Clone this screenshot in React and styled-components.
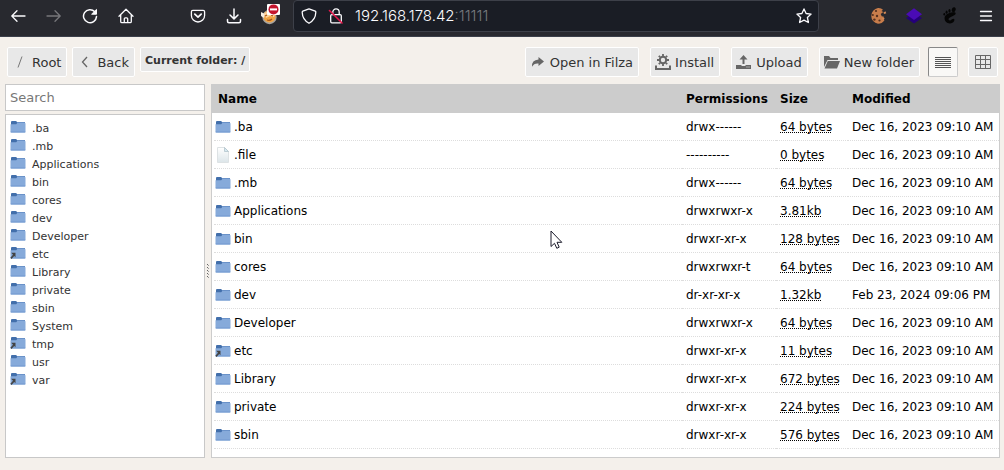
import React from 'react';
import styled, { createGlobalStyle } from 'styled-components';

const GlobalStyle = createGlobalStyle`
  * {
    box-sizing: border-box;
  }
  body {
    margin: 0;
    overflow: hidden;
    background: #f4f0eb;
    font-family: 'DejaVu Sans', Verdana, sans-serif;
  }
  button,
  input {
    font-family: inherit;
  }
`;

const Page = styled.div`
  display: flex;
  flex-direction: column;
  height: 100vh;
`;

const BrowserBar = styled.header`
  display: flex;
  flex: none;
  height: 37px;
  padding-bottom: 4px;
  background: #28292f;
  border-bottom: 1px solid #3b3f4a;
`;

const NavGroup = styled.div`
  display: flex;
  align-items: center;
  margin-left: ${({ $gap }) => $gap || 0}px;
`;

const NavButton = styled.button`
  display: flex;
  align-items: center;
  justify-content: center;
  width: 36px;
  height: 32px;
  padding: 0;
  border: none;
  background: none;
  color: ${({ disabled }) => (disabled ? '#77777b' : '#fbfbfe')};
`;

const AddressBar = styled.form`
  display: flex;
  flex: 1;
  align-items: center;
  gap: 11px;
  min-width: 0;
  margin: 0 0 0 5px;
  padding: 0 6px 0 7px;
  border: 1px solid #3d4049;
  border-radius: 4px;
  background: #1a1d25;
  color: #fbfbfe;
`;

const Address = styled.div`
  flex: 1;
  font-family: Inter, sans-serif;
  font-size: 15px;
  font-weight: 300;
  line-height: 30px;
  color: #fbfbfe;

  span {
    color: #77797e;
  }
`;

const Toolbar = styled.nav`
  display: flex;
  flex: none;
  align-items: flex-start;
  gap: 8px;
  padding: 10px 6px 7px 7px;
`;

const ToolGroup = styled.div`
  display: flex;
  align-items: flex-start;
  gap: ${({ $gap }) => $gap}px;
  margin-left: ${({ $push }) => ($push ? 'auto' : '0')};
`;

const ToolButton = styled.button`
  display: flex;
  align-items: center;
  justify-content: center;
  gap: 4px;
  height: 30px;
  min-width: 30px;
  padding: 0 5px 0 4px;
  border: 1px solid #fff;
  border-color: ${({ $active }) => ($active ? '#888 #ccc #ccc #888' : '#fff')};
  border-radius: 2px;
  background: ${({ $active }) => ($active ? '#f9f8f6' : '#e8e8e8')};
  color: #333;
  font-size: 13px;
  white-space: nowrap;
`;

const CurrentFolder = styled.div`
  height: 25px;
  padding: 0 4px;
  border: 1px solid #fff;
  border-radius: 2px;
  background: #e8e8e8;
  color: #333;
  font-size: 11px;
  font-weight: bold;
  line-height: 26px;
  white-space: nowrap;
`;

const Workspace = styled.main`
  display: flex;
  flex: 1;
  min-height: 0;
  padding: 0 4px 12px 5px;
`;

const Sidebar = styled.aside`
  display: flex;
  flex: none;
  flex-direction: column;
  gap: 3px;
  width: 200px;
`;

const Search = styled.input`
  height: 27px;
  padding: 0 4px;
  border: 1px solid #c8c8c8;
  border-radius: 0;
  outline: none;
  background: #fff;
  font-size: 13px;

  &::placeholder {
    color: #777;
    opacity: 1;
  }
`;

const Tree = styled.ul`
  flex: 1;
  margin: 0;
  padding: 4px;
  overflow: hidden;
  border: 1px solid #c8c8c8;
  background: #fff;
  list-style: none;
`;

const TreeLink = styled.a`
  display: flex;
  align-items: flex-start;
  gap: 6px;
  height: 18px;
  color: #333;
  font-size: 11px;
  line-height: 20px;
  text-decoration: none;
`;

const Splitter = styled.div`
  display: flex;
  flex: none;
  align-items: center;
  justify-content: center;
  width: 6px;
`;

const FilePanel = styled.section`
  flex: 1;
  min-width: 0;
  padding-left: 2px;
  overflow: hidden;
  border: 1px solid #ccc;
  background: #fff;
`;

const FileTable = styled.table`
  width: 100%;
  table-layout: fixed;
  border-spacing: 0;
  color: #000;
  font-size: 12px;
  white-space: nowrap;
`;

const HeadRow = styled.tr`
  background: #ccc;
  box-shadow: -2px 0 #ccc;
`;

const HeadCell = styled.th`
  width: ${({ $width }) => ($width ? `${$width}px` : 'auto')};
  height: 28px;
  padding: 0 4px;
  text-align: left;
`;

const Cell = styled.td`
  height: 28px;
  padding: 0 4px;
  border-bottom: 1px dotted #ddd;

  &:first-child {
    padding-left: 1px;
  }
`;

const FileLink = styled.a`
  display: flex;
  align-items: center;
  gap: 3px;
  color: #000;
  text-decoration: none;
`;

const Size = styled.abbr`
  text-decoration: underline dotted 1px;
  text-decoration-skip-ink: none;
  text-underline-offset: 1px;
`;

const Pointer = styled.svg`
  position: absolute;
  top: 230px;
  left: 550px;
  pointer-events: none;
`;

function LineIcon({ children, size = 16 }) {
  return (
    <svg
      width={size}
      height={size}
      viewBox="0 0 16 16"
      fill="none"
      stroke="currentColor"
      strokeWidth="1.3"
      strokeLinecap="round"
      strokeLinejoin="round"
      aria-hidden="true"
    >
      {children}
    </svg>
  );
}

function ToolIcon({ children }) {
  return (
    <svg width="16" height="16" viewBox="0 0 16 16" fill="#666" aria-hidden="true">
      {children}
    </svg>
  );
}

function FolderIcon({ link }) {
  return (
    <svg width="16" height="16" viewBox="0 -1 16 16" aria-hidden="true">
      <path d="M1 2Q1 1 2 1h3.6Q6.6 1 7 2h7.5q.5 0 .5.6V6H1z" fill="#426fab" />
      <path d="M7 2h7.5q.5 0 .5.6V4H7z" fill="#6a92c9" />
      <path d="M.5 4.200h5.700L7.300 3H15q.5 0 .5.600v8q0 .9-.8.9H1.300q-.8 0-.8-.9z" fill="#86aada" />
      <path d="M.7 12h14.600" stroke="#7299d0" />
      {link && <path d="M1.200 6.800h4.300v4.500L4.200 10l-2.700 2.900L.4 11.700 3 8.800z" fill="#444" />}
    </svg>
  );
}

function FileIcon() {
  return (
    <svg width="16" height="16" viewBox="0 0 16 16" aria-hidden="true">
      <defs>
        <linearGradient id="paper" x1="0" y1="0" x2="0" y2="1">
          <stop offset="0" stopColor="#fff" />
          <stop offset="1" stopColor="#dce5e9" />
        </linearGradient>
      </defs>
      <path d="M2.5.5h7l4 4v11h-11z" fill="url(#paper)" stroke="#dde2e4" />
      <path d="M9.5.5v4h4z" fill="#d8eaf1" stroke="#aabdc6" strokeWidth=".7" />
    </svg>
  );
}

function MonkeyIcon() {
  return (
    <svg width="20" height="24" viewBox="0 0 20 24" aria-hidden="true">
      <circle cx="9.5" cy="13" r="7.2" fill="#a9a49e" />
      <circle cx="9.5" cy="12.5" r="6" fill="#f1a444" />
      <path d="M1 8l4 2-1 4-3-2z" fill="#f6eee3" />
      <path d="M4 9l5-2 6 3-1 3-4-1-4 2z" fill="#ffd49b" />
      <path d="M5 12l2-1M11 11l2 1M7 16q3 1 5-1" stroke="#a95517" strokeWidth="1.2" fill="none" />
      <rect x="7" y="0" width="13" height="11" rx="1" fill="#fff" />
      <circle cx="13.5" cy="5.4" r="5" fill="#c4142e" />
      <path d="M10 5.4h7" stroke="#fff" strokeWidth="2" />
    </svg>
  );
}

function CookieIcon() {
  return (
    <svg width="18" height="18" viewBox="0 0 18 18" aria-hidden="true">
      <path
        d="M9 1q3-.3 5 1.8L12.5 4l1.8 1-2.6 2 1 2.3 2.3.5-.7 2 1.2 1.5Q13 16.8 9 16.8A8 8 0 0 1 9 1z"
        fill="#c87d4b"
      />
      <path d="M16.4 4.2l.9 2-2 .7-1-1.2zM13.8 10.4l1.8.5-.7 1.8-1.8-.8z" fill="#d58b57" />
      <g fill="#54301f">
        <circle cx="7" cy="4" r="1.1" />
        <circle cx="3.8" cy="8" r="1.1" />
        <circle cx="8" cy="9" r="1.2" />
        <circle cx="5.4" cy="12.6" r="1.2" />
        <circle cx="10.5" cy="13.5" r="1.1" />
      </g>
    </svg>
  );
}

function LayersIcon() {
  return (
    <svg width="18" height="18" viewBox="0 0 18 18" aria-hidden="true">
      <path d="M1 11l8-5 8 5-8 5.500z" fill="#25007a" />
      <path d="M1 7.300L9 1.200l8 6.100-8 5.800z" fill="#4a0bb5" />
    </svg>
  );
}

function FootIcon() {
  return (
    <svg width="18" height="18" viewBox="0 0 18 18" fill="#050505" aria-hidden="true">
      <path d="M14.3 5.6C12.8 4.6 4 6.2 3.6 10.6c-.4 3.7 2.4 6 5.4 5.9 3-.1 4.9-2.5 4.3-4.2-.6-1.6-2.6.1-3.6.9-.8.6-2.3.2-2.2-1.1.2-2.3 9.1-3.4 6.8-6.5z" />
      <ellipse cx="12.7" cy="2.7" rx="1.9" ry="2.5" transform="rotate(20 12.7 2.7)" />
      <ellipse cx="8.5" cy="3.8" rx="1.1" ry="1.9" />
      <ellipse cx="5.6" cy="5.2" rx="1" ry="1.6" />
      <ellipse cx="3.3" cy="7.2" rx=".9" ry="1.3" />
    </svg>
  );
}

const files = [
  { name: '.ba', perms: 'drwx------', size: '64 bytes' },
  { name: '.file', perms: '----------', size: '0 bytes', file: true },
  { name: '.mb', perms: 'drwx------', size: '64 bytes' },
  { name: 'Applications', perms: 'drwxrwxr-x', size: '3.81kb' },
  { name: 'bin', perms: 'drwxr-xr-x', size: '128 bytes' },
  { name: 'cores', perms: 'drwxrwxr-t', size: '64 bytes' },
  { name: 'dev', perms: 'dr-xr-xr-x', size: '1.32kb', date: 'Feb 23, 2024 09:06 PM' },
  { name: 'Developer', perms: 'drwxrwxr-x', size: '64 bytes' },
  { name: 'etc', perms: 'drwxr-xr-x', size: '11 bytes', link: true },
  { name: 'Library', perms: 'drwxr-xr-x', size: '672 bytes' },
  { name: 'private', perms: 'drwxr-xr-x', size: '224 bytes' },
  { name: 'sbin', perms: 'drwxr-xr-x', size: '576 bytes' },
  { name: 'System', perms: 'drwxr-xr-x', size: '320 bytes' },
];

const folders = [
  ...files.filter((item) => !item.file),
  { name: 'tmp', link: true },
  { name: 'usr' },
  { name: 'var', link: true },
];

function BrowserHeader() {
  return (
    <BrowserBar>
      <NavGroup>
        <NavButton type="button" aria-label="Go back">
          <LineIcon>
            <path d="M15 8H2M7 2.8L1.8 8 7 13.2" />
          </LineIcon>
        </NavButton>
        <NavButton type="button" aria-label="Go forward" disabled>
          <LineIcon>
            <path d="M1 8h13M9 2.8L14.2 8 9 13.2" />
          </LineIcon>
        </NavButton>
        <NavButton type="button" aria-label="Reload">
          <LineIcon>
            <path d="M12.8 3.8A6.5 6.5 0 1 0 14.5 8.6" strokeWidth="1.5" />
            <path d="M14.5 1.8v4.4H10z" fill="currentColor" strokeWidth="1" />
          </LineIcon>
        </NavButton>
        <NavButton type="button" aria-label="Home">
          <LineIcon>
            <path d="M1 8.2l7-7 7 7M2.7 6.8v6.7q0 1.2 1.2 1.2h8.2q1.2 0 1.2-1.2V6.8M6.3 14.5v-3.7q0-1 1-1h1.4q1 0 1 1v3.7" />
          </LineIcon>
        </NavButton>
      </NavGroup>
      <NavGroup $gap={36}>
        <NavButton type="button" aria-label="Save to Pocket">
          <LineIcon>
            <path d="M2.8 2.3h10.4q1.4 0 1.4 1.4v3.7a6.6 6.6 0 0 1-13.2 0V3.7q0-1.4 1.4-1.4z" />
            <path d="M4.8 6.2L8 9.2l3.2-3" strokeWidth="1.7" />
          </LineIcon>
        </NavButton>
        <NavButton type="button" aria-label="Downloads">
          <LineIcon>
            <path d="M8 1v9.6M4 7l4 3.9L12 7M1.5 11.5v1.7q0 1.5 1.5 1.5h10q1.5 0 1.5-1.5v-1.7" strokeWidth="1.5" />
          </LineIcon>
        </NavButton>
        <NavButton type="button" aria-label="User scripts">
          <MonkeyIcon />
        </NavButton>
      </NavGroup>
      <AddressBar>
        <LineIcon>
          <path d="M8 .9l6.2 2.3q.7.3.6 1.1-.2 7.4-6.800 11Q1.400 11.700 1.200 4.300q0-.8.6-1.100z" />
        </LineIcon>
        <LineIcon>
          <path d="M4.800 6.500V4.100a3.200 3.200 0 0 1 6.400 0v2.400" />
          <rect x="2.700" y="6.600" width="10.600" height="8.200" rx="1.200" />
          <path d="M1.500 2.500l12.500 12.500" stroke="#e6174b" strokeWidth="1.600" />
        </LineIcon>
        <Address>
          192.168.178.42<span>:11111</span>
        </Address>
        <LineIcon>
          <path d="M8 .9l2.100 4.600 5 .6-3.700 3.400 1 5L8 12.100l-4.400 2.400 1-5L.9 6.100l5-.6z" />
        </LineIcon>
      </AddressBar>
      <NavGroup $gap={41}>
        <NavButton type="button" aria-label="Cookies">
          <CookieIcon />
        </NavButton>
        <NavButton type="button" aria-label="Layers">
          <LayersIcon />
        </NavButton>
        <NavButton type="button" aria-label="Shell integration">
          <FootIcon />
        </NavButton>
        <NavButton type="button" aria-label="Menu">
          <LineIcon>
            <path d="M2.500 3.500h11M2.500 8h11M2.500 12.500h11" />
          </LineIcon>
        </NavButton>
      </NavGroup>
    </BrowserBar>
  );
}

function FileToolbar() {
  return (
    <Toolbar>
      <ToolGroup $gap={5}>
        <ToolButton type="button">
          <ToolIcon>
            <path d="M10 2.500L6 13.500" stroke="#777" />
          </ToolIcon>
          Root
        </ToolButton>
        <ToolButton type="button">
          <ToolIcon>
            <path d="M10 3L5.500 8l4.500 5" fill="none" stroke="#666" strokeWidth="1.300" />
          </ToolIcon>
          Back
        </ToolButton>
        <CurrentFolder>Current folder: /</CurrentFolder>
      </ToolGroup>
      <ToolGroup $gap={11} $push>
        <ToolButton type="button">
          <ToolIcon>
            <path d="M8.500 3L14 7.500 8.500 12V9.500Q4 9 2 12.800 1.500 6 8.500 5.500z" />
          </ToolIcon>
          Open in Filza
        </ToolButton>
        <ToolButton type="button">
          <ToolIcon>
            <path d="M0 11.500h2V14h12v-2.500h2V16H0z" />
            <circle cx="8" cy="6" r="3.200" fill="none" stroke="#666" strokeWidth="2" />
            <path
              d="M8 0v2M8 10v2M2 6h2M12 6h2M3.800 1.800l1.400 1.400M10.800 8.800l1.400 1.400M3.800 10.200l1.400-1.400M10.800 3.200l1.400-1.400"
              stroke="#666"
              strokeWidth="1.800"
            />
          </ToolIcon>
          Install
        </ToolButton>
        <ToolButton type="button">
          <ToolIcon>
            <path d="M7.500 1l4 4.500h-3V10h-2V5.500h-3zM0 11h5.500v1h4v-1H15v4H0z" />
            <path d="M10.500 13h1M12.500 13h1" stroke="#e8e8e8" />
          </ToolIcon>
          Upload
        </ToolButton>
        <ToolButton type="button">
          <ToolIcon>
            <path d="M0 2h5l1.500 2H14v2H3.500L0 13zM3.800 7H16l-3 7.500H.5z" />
          </ToolIcon>
          New folder
        </ToolButton>
      </ToolGroup>
      <ToolGroup $gap={10}>
        <ToolButton type="button" aria-label="List view" $active>
          <ToolIcon>
            <path d="M0 3.500h16M0 5.500h16M0 7.500h16M0 9.500h16M0 11.500h16M0 13.500h16" stroke="#555" />
          </ToolIcon>
        </ToolButton>
        <ToolButton type="button" aria-label="Grid view">
          <ToolIcon>
            <path
              d="M.5 1.500h15v13H.5zM.5 5.500h15M.5 10.500h15M5.500 1.500v13M10.500 1.500v13"
              fill="none"
              stroke="#666"
            />
          </ToolIcon>
        </ToolButton>
      </ToolGroup>
    </Toolbar>
  );
}

function App() {
  return (
    <>
      <GlobalStyle />
      <Page>
        <BrowserHeader />
        <FileToolbar />
        <Workspace>
          <Sidebar>
            <Search type="search" placeholder="Search" aria-label="Search" />
            <Tree>
              {folders.map(({ name, link }) => (
                <li key={name}>
                  <TreeLink href={`#${name}`}>
                    <FolderIcon link={link} />
                    {name}
                  </TreeLink>
                </li>
              ))}
            </Tree>
          </Sidebar>
          <Splitter>
            <svg width="4" height="14" viewBox="0 0 4 14" aria-hidden="true">
              <path d="M1.500 0v14" stroke="#666" strokeDasharray="1 2" />
              <path d="M2.500 1v13" stroke="#999" strokeDasharray="1 2" />
            </svg>
          </Splitter>
          <FilePanel>
            <FileTable>
              <thead>
                <HeadRow>
                  <HeadCell>Name</HeadCell>
                  <HeadCell $width={94}>Permissions</HeadCell>
                  <HeadCell $width={72}>Size</HeadCell>
                  <HeadCell $width={151}>Modified</HeadCell>
                </HeadRow>
              </thead>
              <tbody>
                {files.map(({ name, perms, size, date, file, link }) => (
                  <tr key={name}>
                    <Cell>
                      <FileLink href={`#${name}`}>
                        {file ? <FileIcon /> : <FolderIcon link={link} />}
                        {name}
                      </FileLink>
                    </Cell>
                    <Cell>{perms}</Cell>
                    <Cell>
                      <Size title={size}>{size}</Size>
                    </Cell>
                    <Cell>{date || 'Dec 16, 2023 09:10 AM'}</Cell>
                  </tr>
                ))}
              </tbody>
            </FileTable>
          </FilePanel>
        </Workspace>
      </Page>
      <Pointer width="13" height="20" viewBox="0 0 13 20" aria-hidden="true">
        <path
          d="M1 1v15.500l3.500-3.200 2.300 5 2.400-1.100-2.200-4.900h4.800z"
          fill="#fff"
          stroke="#1b1b2b"
        />
      </Pointer>
    </>
  );
}

export default App;
